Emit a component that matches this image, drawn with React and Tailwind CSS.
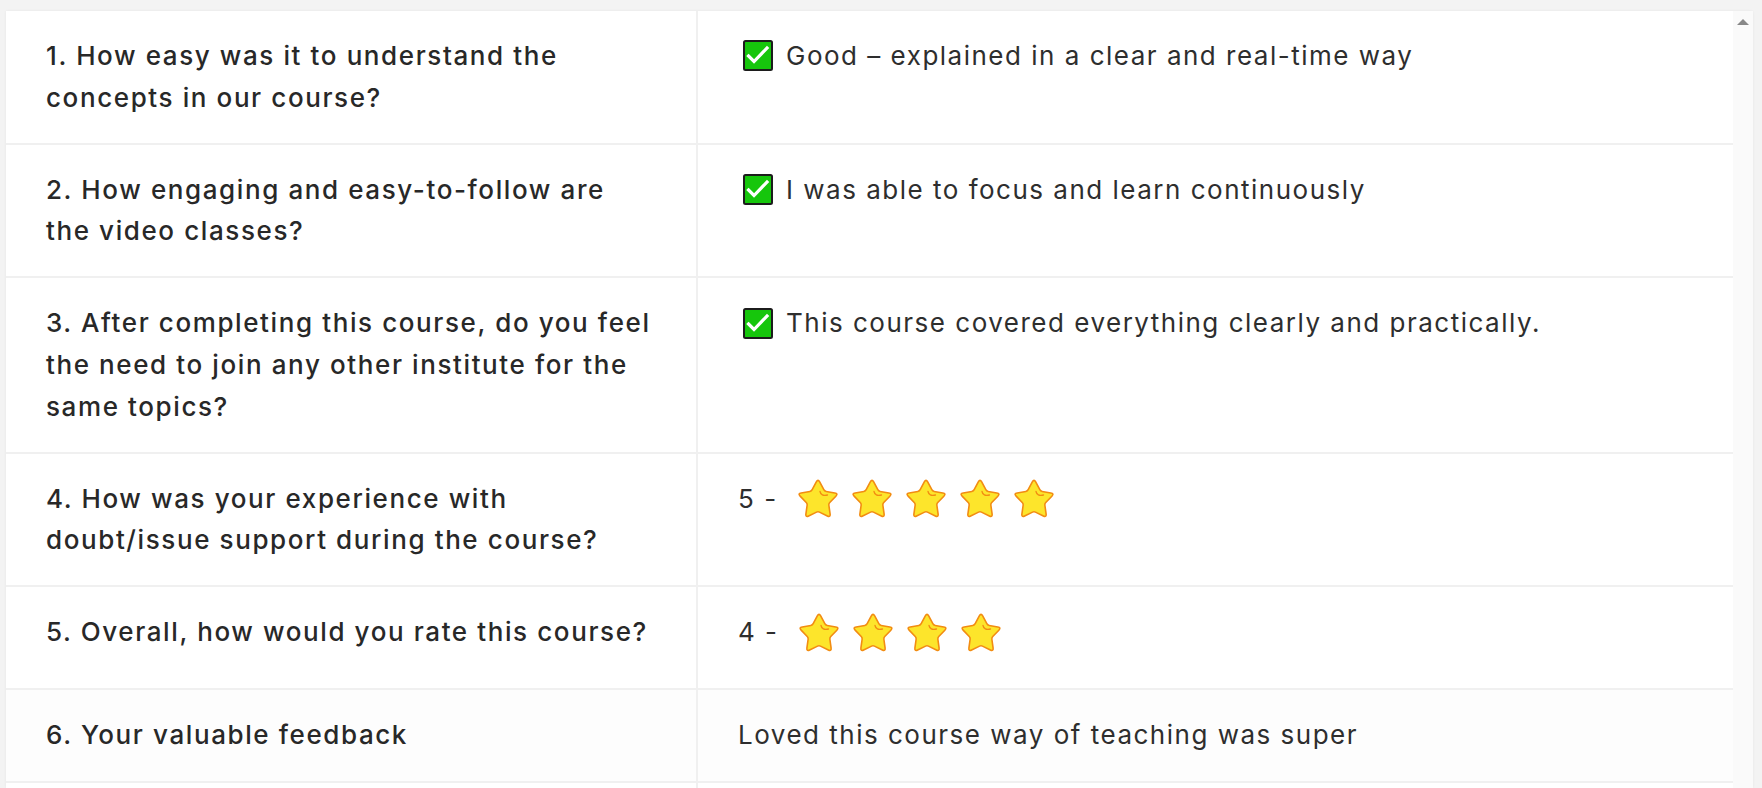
import React from "react";

const rows = [
  {
    q: ["1. How easy was it to understand the", "concepts in our course?"],
    kind: "check",
    a: "Good – explained in a clear and real-time way",
  },
  {
    q: ["2. How engaging and easy-to-follow are", "the video classes?"],
    kind: "check",
    a: "I was able to focus and learn continuously",
  },
  {
    q: [
      "3. After completing this course, do you feel",
      "the need to join any other institute for the",
      "same topics?",
    ],
    kind: "check",
    a: "This course covered everything clearly and practically.",
  },
  {
    q: ["4. How was your experience with", "doubt/issue support during the course?"],
    kind: "stars",
    rating: 5,
  },
  {
    q: ["5. Overall, how would you rate this course?"],
    kind: "stars",
    rating: 4,
  },
  {
    q: ["6. Your valuable feedback"],
    kind: "text",
    a: "Loved this course way of teaching was super",
  },
];

// rounded five point star, built once
function starPath(cx, cy, R, r) {
  const pts = [];
  for (let i = 0; i < 10; i++) {
    const ang = ((-90 + i * 36) * Math.PI) / 180;
    const rad = i % 2 === 0 ? R : r;
    pts.push([cx + rad * Math.cos(ang), cy + rad * Math.sin(ang)]);
  }
  const along = (a, b, d) => {
    const dx = b[0] - a[0];
    const dy = b[1] - a[1];
    const len = Math.hypot(dx, dy);
    return [a[0] + (dx / len) * d, a[1] + (dy / len) * d];
  };
  const f = (p) => `${p[0].toFixed(2)} ${p[1].toFixed(2)}`;
  let d = "";
  for (let i = 0; i < 10; i++) {
    const prev = pts[(i + 9) % 10];
    const cur = pts[i];
    const next = pts[(i + 1) % 10];
    const round = i % 2 === 0 ? 3.6 : 1.6;
    const p1 = along(cur, prev, round);
    const p2 = along(cur, next, round);
    d += `${i === 0 ? "M" : "L"}${f(p1)} Q${f(cur)} ${f(p2)} `;
  }
  return d + "Z";
}

const STAR = starPath(20, 21.2, 21.4, 11.2);

function Star() {
  return (
    <svg width="40" height="38" viewBox="0 0 40 38" className="shrink-0 overflow-visible">
      <path d={STAR} fill="#FDE52B" stroke="#F28C12" strokeWidth="1.6" strokeLinejoin="round" />
      <path d="M22 12.5 Q23 17.5 29.5 16" fill="none" stroke="#F28C12" strokeWidth="1.3" strokeLinecap="round" />
    </svg>
  );
}

function CheckBox() {
  return (
    <svg width="30" height="31" viewBox="0 0 30 31" className="shrink-0">
      <rect x="1" y="1" width="28" height="29" rx="1.5" fill="#16C60C" stroke="#1c1c1c" strokeWidth="2" />
      <path d="M5.5 16 L11 21.5 L24 8" fill="none" stroke="#fff" strokeWidth="3.2" strokeLinecap="square" />
    </svg>
  );
}

function Answer({ row }) {
  if (row.kind === "check") {
    return (
      <div className="flex h-[41.6px] items-center">
        <span className="ml-[5px]">
          <CheckBox />
        </span>
        <span className="ml-[13px]">{row.a}</span>
      </div>
    );
  }
  if (row.kind === "stars") {
    return (
      <div className="mb-[11px] flex h-[41.6px] items-center">
        <span>{row.rating} -</span>
        <div className="ml-[20px] flex gap-[14px]">
          {Array.from({ length: row.rating }).map((_, i) => (
            <Star key={i} />
          ))}
        </div>
      </div>
    );
  }
  return <div>{row.a}</div>;
}

export default function App() {
  return (
    <div
      className="h-screen overflow-hidden bg-[#f3f3f3] pt-[11px] pl-[6px] pr-[9px] text-[26px] leading-[1.6] tracking-[1.5px]"
      style={{ fontFamily: "Inter, 'Noto Sans', sans-serif" }}
    >
      <div className="flex h-full rounded-tr-[3px] bg-white shadow-[0_0_3px_rgba(0,0,0,0.06)]">
        <div className="flex-1">
          {rows.map((row, i) => (
            <div
              key={i}
              className={`grid grid-cols-[692px_1fr] border-b-2 border-[#f0f0f0] ${
                i === rows.length - 1 ? "bg-[#fdfdfd]" : "bg-white"
              }`}
            >
              <div className="border-r-2 border-[#f0f0f0] px-10 pt-6 pb-[24.5px] font-medium tracking-[1.6px] text-[#282828]">
                {row.q.map((line, j) => (
                  <React.Fragment key={j}>
                    {line}
                    {j < row.q.length - 1 && <br />}
                  </React.Fragment>
                ))}
              </div>
              <div className="px-10 pt-6 pb-[24.5px] text-[#2e2e2e]">
                <Answer row={row} />
              </div>
            </div>
          ))}
          <div className="grid h-[120px] grid-cols-[692px_1fr]">
            <div className="border-r-2 border-[#f0f0f0]" />
            <div />
          </div>
        </div>
        <div className="w-5 shrink-0 bg-[#fafafa] pt-[8px]">
          <div className="mx-auto h-0 w-0 border-x-[6px] border-b-[6px] border-x-transparent border-b-[#888888]" />
        </div>
      </div>
    </div>
  );
}
